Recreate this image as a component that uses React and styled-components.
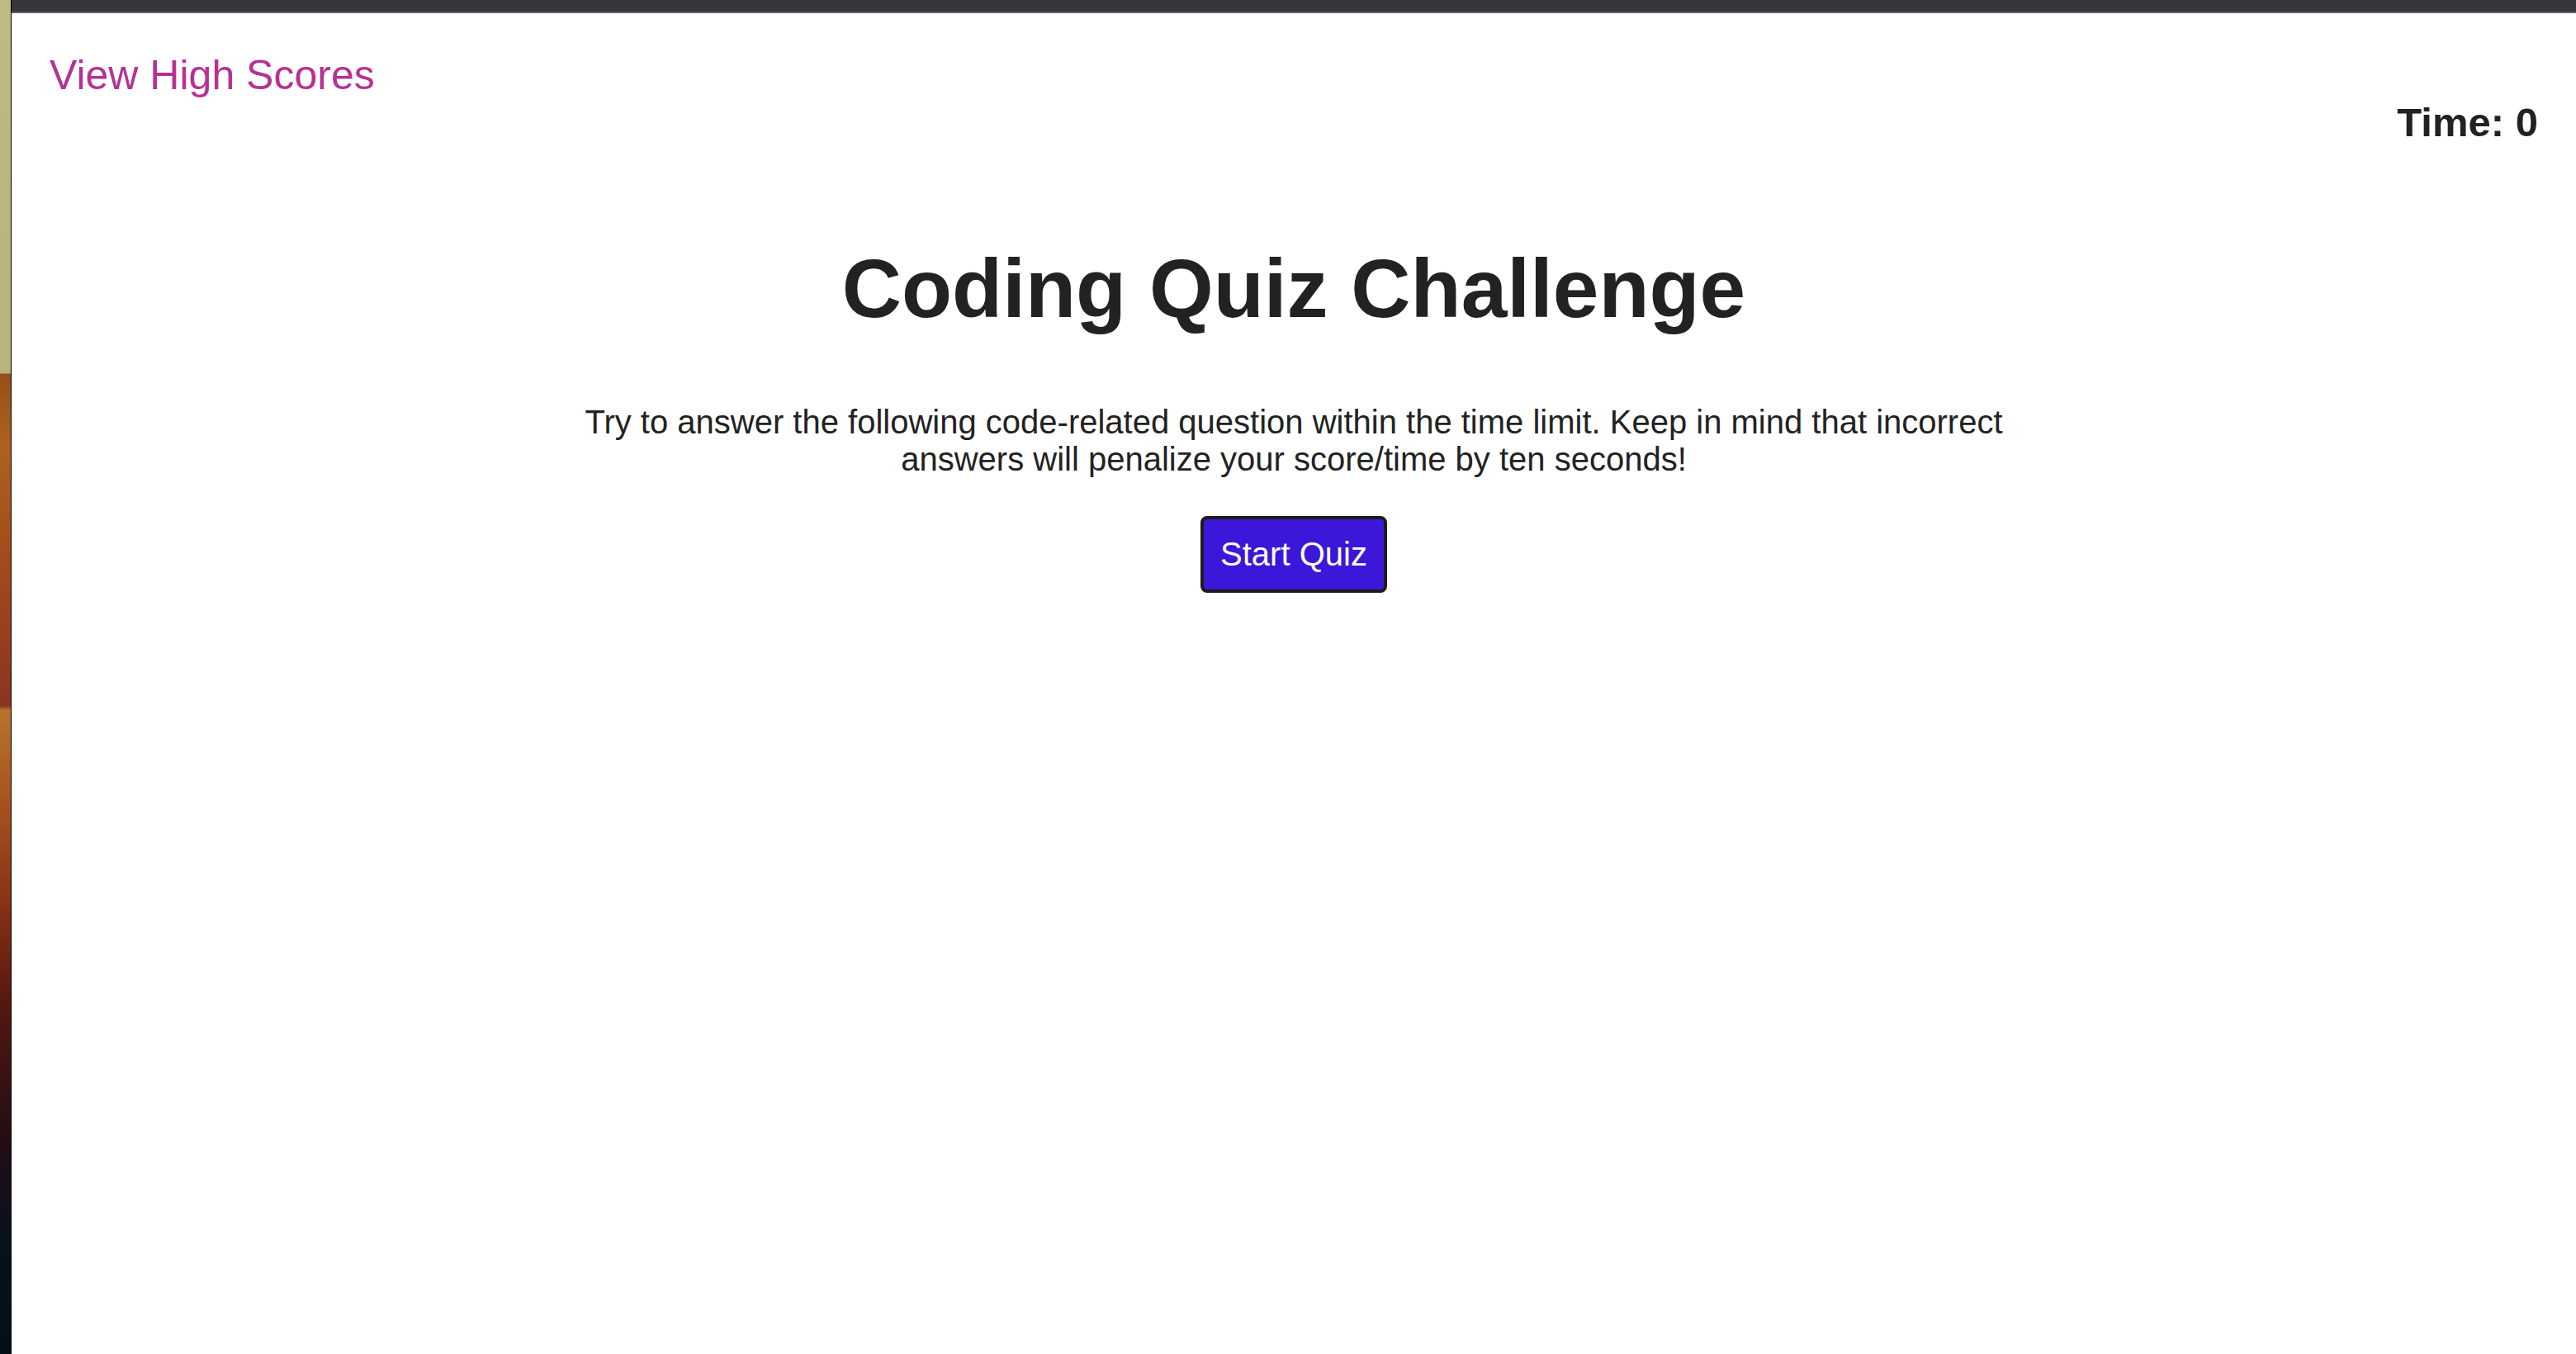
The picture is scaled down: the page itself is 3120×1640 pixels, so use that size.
import React, { useState } from 'react';
import styled, { createGlobalStyle } from 'styled-components';

const GlobalStyle = createGlobalStyle`
  html,
  body {
    margin: 0;
    height: 100%;
  }

  body {
    font-family: 'Liberation Sans', Arial, Helvetica, sans-serif;
    overflow: hidden;
  }
`;

export default function App() {
  const [time] = useState(0);

  return (
    <>
      <GlobalStyle />
      <Desktop>
        <Wallpaper />
        <Window>
          <TitleBar />
          <Page>
            <Header>
              <HighScoresLink href='#highscores'>View High Scores</HighScoresLink>
              <Timer>Time: {time}</Timer>
            </Header>
            <Intro>
              <Title>Coding Quiz Challenge</Title>
              <Lead>
                Try to answer the following code-related question within the
                time limit. Keep in mind that incorrect answers will penalize
                your score/time by ten seconds!
              </Lead>
              <StartButton type='button'>Start Quiz</StartButton>
            </Intro>
          </Page>
        </Window>
      </Desktop>
    </>
  );
}

const Desktop = styled.div`
  display: flex;
  height: 100vh;
`;

// sliver of desktop wallpaper showing beside the browser window
const Wallpaper = styled.div`
  width: 13px;
  flex-shrink: 0;
  border-right: 1px solid #000;
  background: linear-gradient(
    to bottom,
    #bfb982 0,
    #b9b27a 452px,
    #94501a 453px,
    #ad611f 540px,
    #9f451d 720px,
    #8b3420 855px,
    #b7742f 860px,
    #aa561f 960px,
    #842d15 1110px,
    #521710 1220px,
    #220e14 1380px,
    #08111e 1500px,
    #03101c 100%
  );
`;

const Window = styled.div`
  flex: 1;
  display: flex;
  flex-direction: column;
  background: #fff;
`;

const TitleBar = styled.div`
  height: 14px;
  background: #35363a;
  border-bottom: 2px solid #5f6064;
`;

const Page = styled.main`
  flex: 1;
  padding: 0 46px;
  color: #222;
`;

const Header = styled.header`
  display: flex;
  justify-content: space-between;
  align-items: flex-start;
  padding-top: 46px;
`;

const HighScoresLink = styled.a`
  font-size: 50px;
  color: #b73193;
  text-decoration: none;
`;

const Timer = styled.div`
  margin-top: 58px;
  font-size: 49px;
  font-weight: bold;
`;

const Intro = styled.section`
  display: flex;
  flex-direction: column;
  align-items: center;
  text-align: center;
`;

const Title = styled.h1`
  margin: 116px 0 0;
  font-size: 100px;
  font-weight: bold;
`;

const Lead = styled.p`
  width: 60%;
  margin: 82px 0 0;
  font-size: 40px;
`;

const StartButton = styled.button`
  margin-top: 46px;
  padding: 20px 20px;
  font-family: inherit;
  font-size: 40px;
  line-height: normal;
  color: #fff;
  background: #3c17d9;
  border: 4px solid #1c1c1c;
  border-radius: 8px;
  cursor: pointer;
`;
